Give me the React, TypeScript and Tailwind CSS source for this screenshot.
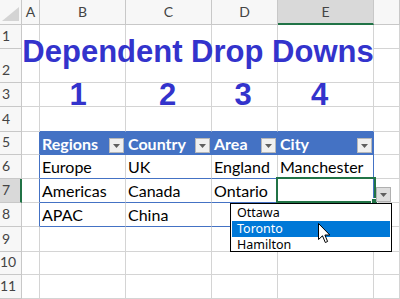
import type { ReactNode } from 'react'

// Excel-like sheet: dependent drop downs demo

function Tri({ className = '' }: { className?: string }) {
  return (
    <svg width="7" height="4" viewBox="0 0 7 4" className={className}>
      <path d="M0 0 L7 0 L3.5 4 Z" fill="#5f5f5f" />
    </svg>
  )
}

function ColHead({ label, active }: { label: string; active?: boolean }) {
  return (
    <div
      className={`flex items-center justify-center border-r border-r-[#c8c8c8] text-[14px] leading-none text-[#444] ${
        active ? 'bg-[#d9d9d9] border-b-2 border-b-[#217346]' : 'bg-[#f7f7f7] border-b border-b-[#c8c8c8]'
      }`}
    >
      {label}
    </div>
  )
}

function RowHead({ n, active, span }: { n: number; active?: boolean; span?: string }) {
  return (
    <div
      className={`flex items-end border-b border-b-[#c8c8c8] text-[14px] leading-none text-[#444] pb-[5px] ${
        n >= 10 ? 'pl-0' : 'pl-[2px]'
      } ${active ? 'bg-[#d9d9d9] border-r-2 border-r-[#217346]' : 'bg-[#f7f7f7] border-r border-r-[#c8c8c8]'} ${span ?? ''}`}
    >
      {n}
    </div>
  )
}

function C({
  children,
  r = 'border-r-[#d4d4d4]',
  b = 'border-b-[#d4d4d4]',
  className = '',
}: {
  children?: ReactNode
  r?: string
  b?: string
  className?: string
}) {
  return <div className={`border-r border-b ${r} ${b} min-w-0 ${className}`}>{children}</div>
}

const BLUE_R = 'border-r-[#4472c4]'
const BLUE_B = 'border-b-[#4472c4]'

function HeadCell({ label, last }: { label: string; last?: boolean }) {
  return (
    <C r={last ? BLUE_R : 'border-r-[#4472c4]'} b={BLUE_B} className="flex items-end justify-between bg-[#4472c4]">
      <span className="pl-[2px] pb-[2px] text-[16px] leading-none font-bold text-white">{label}</span>
      <span className="mr-[1px] mb-[1px] flex h-[15px] w-[15px] items-end justify-center border border-[#b8b8b8] bg-[#f0f0f0] pb-[4px]">
        <Tri />
      </span>
    </C>
  )
}

function DataCell({ text, last }: { text?: string; last?: boolean }) {
  return (
    <C r={last ? BLUE_R : 'border-r-[#d4d4d4]'} b={BLUE_B} className="flex items-end pl-[2px] pb-[3px] text-[16px] leading-none text-black">
      {text}
    </C>
  )
}

function Digit({ d, pr }: { d: string; pr: string }) {
  return (
    <C className={`overflow-visible text-center text-[31px] font-bold leading-[24px] text-[#3333cc] font-['Liberation_Sans',Arial,sans-serif] ${pr}`}>
      {d}
    </C>
  )
}

export default function App() {
  const blank = (n: number) =>
    Array.from({ length: n }).map((_, i) => <C key={i} />)

  return (
    <div className="h-[299px] w-[400px] overflow-hidden bg-white font-['Lato',sans-serif]">
      <div className="grid grid-cols-[22px_18px_86px_86px_66px_96px_26px] grid-rows-[25px_24px_34px_24px_25px_23px_24px_24px_24px_25px_23px_24px]">
        {/* column headers */}
        <div className="flex items-end justify-end border-r border-b border-r-[#c8c8c8] border-b-[#c8c8c8] bg-[#f7f7f7] pr-[2px] pb-[3px]">
          <svg width="17" height="14" viewBox="0 0 17 14">
            <path d="M17 0 L17 14 L0 14 Z" fill="#d4d4d4" />
          </svg>
        </div>
        <ColHead label="A" />
        <ColHead label="B" />
        <ColHead label="C" />
        <ColHead label="D" />
        <ColHead label="E" active />
        <ColHead label="" />

        {/* rows 1-2: title */}
        <RowHead n={1} />
        <C className="row-span-2 overflow-visible">
          <div className="relative z-10 mt-[11px] w-[352px] whitespace-nowrap text-center text-[31px] font-bold leading-[31px] text-[#3333cc] font-['Liberation_Sans',Arial,sans-serif]">
            Dependent Drop Downs
          </div>
        </C>
        <C className="row-span-2" />
        <C className="row-span-2" />
        <C className="row-span-2" />
        <C className="row-span-2" />
        <C />
        <RowHead n={2} />
        <C />

        {/* row 3: step numbers */}
        <RowHead n={3} />
        <C />
        <Digit d="1" pr="pr-[9px]" />
        <Digit d="2" pr="pr-[2px]" />
        <Digit d="3" pr="pr-[3px]" />
        <Digit d="4" pr="pr-[12px]" />
        <C />

        {/* row 4 */}
        <RowHead n={4} />
        <C />
        <C b={BLUE_B} />
        <C b={BLUE_B} />
        <C b={BLUE_B} />
        <C b={BLUE_B} />
        <C />

        {/* row 5: table header */}
        <RowHead n={5} />
        <C r={BLUE_R} />
        <HeadCell label="Regions" />
        <HeadCell label="Country" />
        <HeadCell label="Area" />
        <HeadCell label="City" last />
        <C />

        {/* row 6 */}
        <RowHead n={6} />
        <C r={BLUE_R} />
        <DataCell text="Europe" />
        <DataCell text="UK" />
        <DataCell text="England" />
        <DataCell text="Manchester" last />
        <C />

        {/* row 7 with active drop down */}
        <RowHead n={7} active />
        <C r={BLUE_R} />
        <DataCell text="Americas" />
        <DataCell text="Canada" />
        <DataCell text="Ontario" />
        <C r={BLUE_R} b={BLUE_B} className="relative">
          <div className="absolute left-[-2px] top-[-2px] z-20 h-[26px] w-[100px] border-2 border-[#217346]">
            <div className="absolute right-[-4px] bottom-[-4px] h-[7px] w-[7px] border border-white bg-[#217346]" />
          </div>
          <div className="absolute left-[98px] top-[8px] z-20 flex h-[15px] w-[15px] items-end justify-center border border-[#b0b0b0] bg-[#dedede] pb-[4px]">
            <Tri />
          </div>
          <div className="absolute left-[-48px] top-[24px] z-30 flex h-[49px] w-[162px] flex-col border border-black bg-white p-px text-[12.5px] text-black font-['Noto_Sans',sans-serif]">
            <div className="h-[16px] pl-[5px] leading-[16px]">Ottawa</div>
            <div className="h-[16px] bg-[#0078d7] pl-[5px] leading-[16px] text-white">Toronto</div>
            <div className="h-[15px] pl-[5px] leading-[15px]">Hamilton</div>
          </div>
          <svg
            width="13"
            height="21"
            viewBox="0 0 13 21"
            className="absolute left-[40px] top-[44px] z-40"
          >
            <path
              d="M0.5 0.5 L0.5 16.5 L4.5 12.8 L7.3 19.5 L9.6 18.5 L6.9 12 L11.8 12 Z"
              fill="white"
              stroke="black"
              strokeWidth="1"
              strokeLinejoin="round"
            />
          </svg>
        </C>
        <C />

        {/* row 8 */}
        <RowHead n={8} />
        <C r={BLUE_R} />
        <DataCell text="APAC" />
        <DataCell text="China" />
        <DataCell />
        <DataCell last />
        <C />

        {/* rows 9-11 */}
        <RowHead n={9} />
        {blank(6)}
        <RowHead n={10} />
        {blank(6)}
        <RowHead n={11} />
        {blank(6)}
      </div>
    </div>
  )
}
